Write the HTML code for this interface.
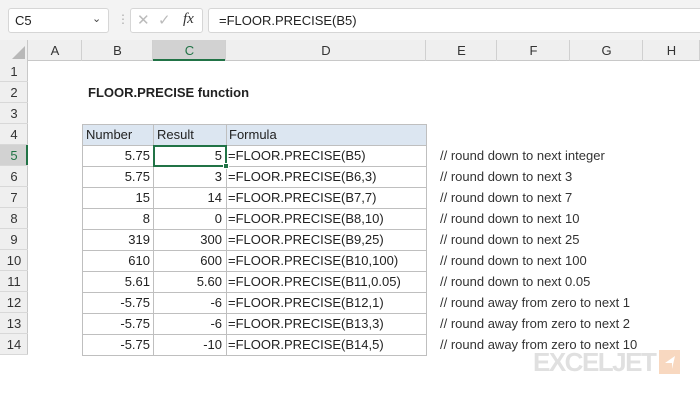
<!DOCTYPE html><html><head><style>
body{margin:0;width:700px;height:400px;background:#fff;font-family:"Liberation Sans",sans-serif;position:relative;overflow:hidden}
.a{position:absolute;box-sizing:border-box}
.t{position:absolute;font-size:13px;line-height:21px;white-space:nowrap;color:#222}
</style></head><body>
<div class="a" style="left:0;top:0;width:700px;height:40px;background:#f3f3f3"></div>
<div class="a" style="left:8px;top:8px;width:101px;height:25px;background:#fff;border:1px solid #d6d6d6;border-radius:3px"></div>
<div class="t" style="left:15px;top:10px;font-size:13px">C5</div>
<div class="t" style="left:92px;top:9px;font-size:11px;color:#444">&#8964;</div>
<div class="t" style="left:117px;top:9px;color:#aaa;font-size:12px">⋮</div>
<div class="a" style="left:130px;top:8px;width:73px;height:25px;background:#fff;border:1px solid #d6d6d6;border-radius:3px"></div>
<div class="t" style="left:137px;top:10px;color:#bbb;font-size:15px">✕</div>
<div class="t" style="left:158px;top:10px;color:#bbb;font-size:15px">✓</div>
<div class="t" style="left:183px;top:9px;font-family:'Liberation Serif';font-style:italic;font-size:15px;color:#333">fx</div>
<div class="a" style="left:208px;top:8px;width:500px;height:25px;background:#fff;border:1px solid #d6d6d6;border-radius:3px"></div>
<div class="t" style="left:219px;top:10px">=FLOOR.PRECISE(B5)</div>
<div class="a" style="left:0;top:40px;width:700px;height:21px;background:#efefef;border-bottom:1px solid #c8c8c8"></div>
<div class="a" style="left:153px;top:40px;width:73px;height:21px;background:#d2d2d2;border-bottom:2px solid #217346"></div>
<div class="a" style="left:0;top:40px;width:28px;height:315px;background:#efefef;border-right:1px solid #c8c8c8"></div>
<div class="a" style="left:0;top:145px;width:28px;height:21px;background:#d2d2d2;border-right:2px solid #217346"></div>
<svg class="a" style="left:12px;top:46px" width="13" height="13"><polygon points="13,0 13,13 0,13" fill="#b8b8b8"/></svg>
<div class="a" style="left:82px;top:124px;width:344px;height:21px;background:#dce6f1"></div>
<div id="g"></div>
<div class="t" style="left:88px;top:82px;font-weight:bold">FLOOR.PRECISE function</div>
<div class="a" style="left:153px;top:145px;width:74px;height:22px;border:2px solid #217346"></div>
<div class="a" style="left:223px;top:163px;width:6px;height:6px;background:#217346;border:1px solid #fff"></div>
<div class="a" style="left:533px;top:347px;font:bold 26px/30px 'Liberation Sans';color:#e0e0e0;letter-spacing:-1.5px;white-space:nowrap">EXCELJET</div>
<div class="a" style="left:659px;top:350px;width:21px;height:24px;background:#f8d8c0"></div>
<svg class="a" style="left:662px;top:354px" width="15" height="16"><polygon points="13,2 3,9 10,9 10,15" fill="#fff"/></svg>
<script>
var cols=[[28,82,'A'],[82,153,'B'],[153,226,'C'],[226,426,'D'],[426,497,'E'],[497,570,'F'],[570,643,'G'],[643,700,'H']];
var h='';
cols.forEach(c=>{h+=`<div class="a" style="left:${c[1]-1}px;top:40px;width:1px;height:21px;background:#d0d0d0"></div><div class="t" style="left:${c[0]}px;width:${c[1]-c[0]}px;top:40px;text-align:center;color:${c[2]=='C'?'#217346':'#333'}">${c[2]}</div>`});
for(var r=1;r<=14;r++){var y=61+(r-1)*21;h+=`<div class="t" style="left:0;width:28px;top:${y}px;text-align:center;color:${r==5?'#217346':'#333'}">${r}</div><div class="a" style="left:0;top:${y+20}px;width:28px;height:1px;background:#d8d8d8"></div>`;}
var d=[["5.75","5","(B5)","round down to next integer"],["5.75","3","(B6,3)","round down to next 3"],["15","14","(B7,7)","round down to next 7"],["8","0","(B8,10)","round down to next 10"],["319","300","(B9,25)","round down to next 25"],["610","600","(B10,100)","round down to next 100"],["5.61","5.60","(B11,0.05)","round down to next 0.05"],["-5.75","-6","(B12,1)","round away from zero to next 1"],["-5.75","-6","(B13,3)","round away from zero to next 2"],["-5.75","-10","(B14,5)","round away from zero to next 10"]];
for(var r=4;r<=14;r++){var y=61+(r-1)*21;h+=`<div class="a" style="left:82px;top:${y}px;width:345px;height:22px;border:1px solid #bfbfbf"></div><div class="a" style="left:153px;top:${y}px;width:1px;height:22px;background:#bfbfbf"></div><div class="a" style="left:226px;top:${y}px;width:1px;height:22px;background:#bfbfbf"></div>`;}
h+=`<div class="t" style="left:86px;top:124px">Number</div><div class="t" style="left:157px;top:124px">Result</div><div class="t" style="left:229px;top:124px">Formula</div>`;
d.forEach((x,i)=>{var y=145+i*21;h+=`<div class="t" style="left:82px;width:68px;text-align:right;top:${y}px">${x[0]}</div><div class="t" style="left:153px;width:69px;text-align:right;top:${y}px">${x[1]}</div><div class="t" style="left:228px;top:${y}px">=FLOOR.PRECISE${x[2]}</div><div class="t" style="left:440px;top:${y}px;color:#333">// ${x[3]}</div>`});
document.getElementById('g').innerHTML=h;
</script>
</body></html>
